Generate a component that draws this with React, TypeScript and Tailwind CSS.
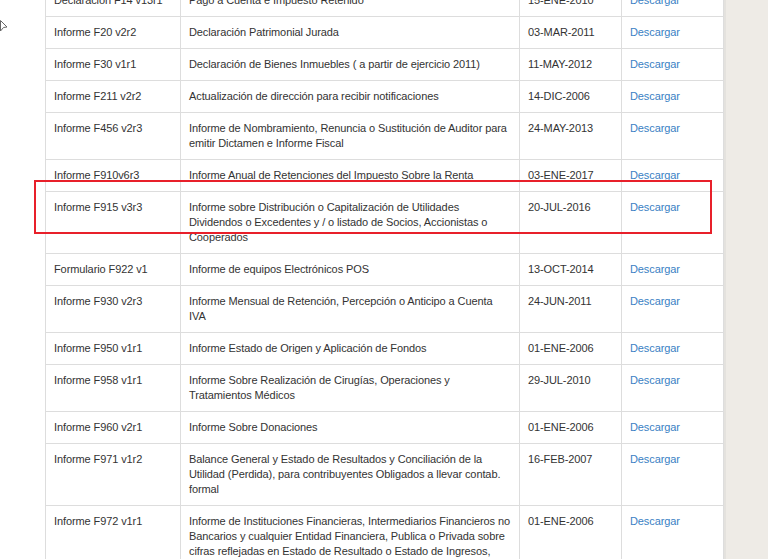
const rows: [string, string, string][] = [
  ["Declaración F14 v13r1", "Pago a Cuenta e Impuesto Retenido", "15-ENE-2010"],
  ["Informe F20 v2r2", "Declaración Patrimonial Jurada", "03-MAR-2011"],
  ["Informe F30 v1r1", "Declaración de Bienes Inmuebles ( a partir de ejercicio 2011)", "11-MAY-2012"],
  ["Informe F211 v2r2", "Actualización de dirección para recibir notificaciones", "14-DIC-2006"],
  ["Informe F456 v2r3", "Informe de Nombramiento, Renuncia o Sustitución de Auditor para emitir Dictamen e Informe Fiscal", "24-MAY-2013"],
  ["Informe F910v6r3", "Informe Anual de Retenciones del Impuesto Sobre la Renta", "03-ENE-2017"],
  ["Informe F915 v3r3", "Informe sobre Distribución o Capitalización de Utilidades Dividendos o Excedentes y / o listado de Socios, Accionistas o Cooperados", "20-JUL-2016"],
  ["Formulario F922 v1", "Informe de equipos Electrónicos POS", "13-OCT-2014"],
  ["Informe F930 v2r3", "Informe Mensual de Retención, Percepción o Anticipo a Cuenta IVA", "24-JUN-2011"],
  ["Informe F950 v1r1", "Informe Estado de Origen y Aplicación de Fondos", "01-ENE-2006"],
  ["Informe F958 v1r1", "Informe Sobre Realización de Cirugías, Operaciones y Tratamientos Médicos", "29-JUL-2010"],
  ["Informe F960 v2r1", "Informe Sobre Donaciones", "01-ENE-2006"],
  ["Informe F971 v1r2", "Balance General y Estado de Resultados y Conciliación de la Utilidad (Perdida), para contribuyentes Obligados a llevar contab. formal", "16-FEB-2007"],
  ["Informe F972 v1r1", "Informe de Instituciones Financieras, Intermediarios Financieros no Bancarios y cualquier Entidad Financiera, Publica o Privada sobre cifras reflejadas en Estado de Resultado o Estado de Ingresos, Costos y Gastos de solicitantes de Prestamos, Creditos o Financiamientos", "01-ENE-2006"],
];

const cell = "border border-[#ddd] px-2 py-2 align-top font-[Liberation_Sans,Arial,sans-serif] text-[11px] leading-[15px] tracking-[-0.1px]";

export default function App() {
  return (
    <div className="flex h-[559px] overflow-hidden bg-[#eeebe6] font-[Liberation_Sans,Arial,sans-serif] text-[11px] leading-[15px] text-[#333]">
      <div className="relative w-[726px] shrink-0 border-r-2 border-[#e4e2de] bg-white">
        <svg className="absolute left-0 top-[20px]" width="8" height="14" viewBox="0 0 8 14">
          <path d="M0.5 0.5 L7 7 L3.5 7.5 L0.5 11 Z" fill="white" stroke="#666" strokeWidth="1" />
        </svg>
        <table className="ml-[45px] mt-[-16px] w-[678px] table-fixed border-collapse">
          <colgroup>
            <col className="w-[135px]" />
            <col className="w-[339px]" />
            <col className="w-[102px]" />
            <col className="w-[102px]" />
          </colgroup>
          <tbody>
            {rows.map(([form, desc, date]) => (
              <tr key={form}>
                <td className={`${cell} whitespace-nowrap`}>{form}</td>
                <td className={cell}>{desc}</td>
                <td className={cell}>{date}</td>
                <td className={`${cell} text-[#3a7fc4]`}>Descargar</td>
              </tr>
            ))}
          </tbody>
        </table>
        <div className="absolute left-[34px] top-[180px] h-[54px] w-[678px] border-2 border-[#e8202a]" />
      </div>
      <div className="flex-1" />
    </div>
  );
}
